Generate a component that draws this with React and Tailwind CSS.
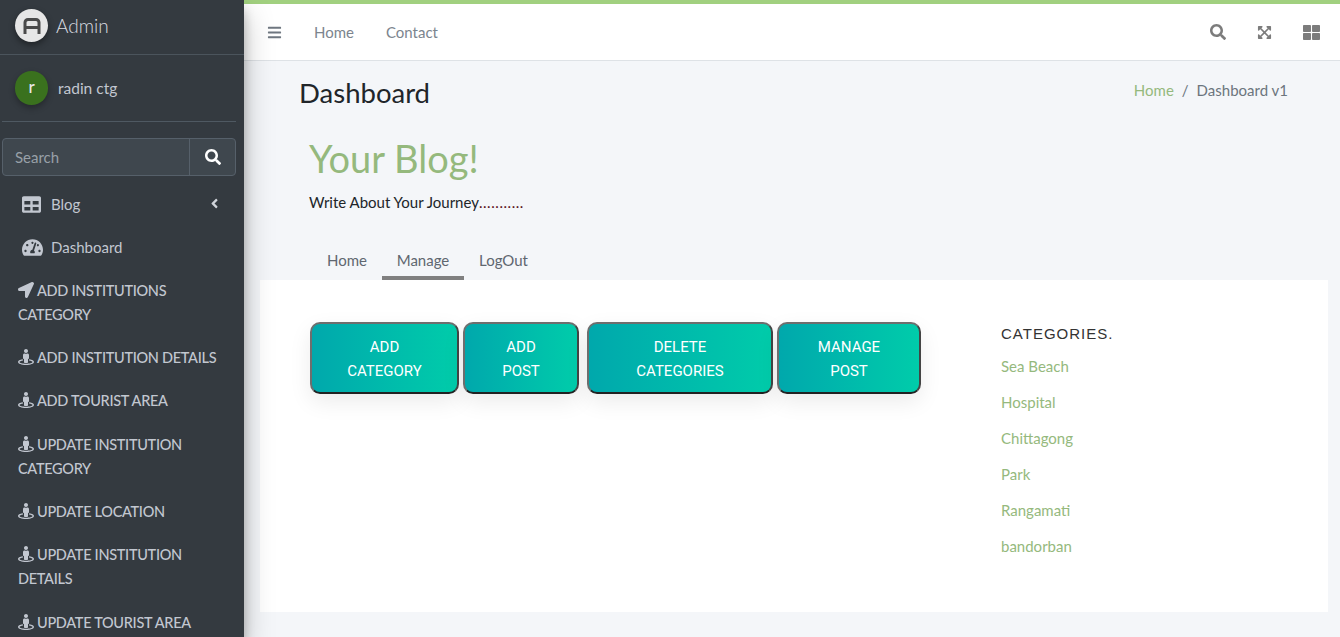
import React from "react";
import { FaBars, FaSearch, FaExpandArrowsAlt, FaThLarge, FaTable, FaTachometerAlt, FaAngleLeft, FaLocationArrow, FaStreetView } from "react-icons/fa";

const items = [
  [FaLocationArrow, "ADD INSTITUTIONS CATEGORY"],
  [FaStreetView, "ADD INSTITUTION DETAILS"],
  [FaStreetView, "ADD TOURIST AREA"],
  [FaStreetView, "UPDATE INSTITUTION CATEGORY"],
  [FaStreetView, "UPDATE LOCATION"],
  [FaStreetView, "UPDATE INSTITUTION DETAILS"],
  [FaStreetView, "UPDATE TOURIST AREA"],
];
const cats = ["Sea Beach", "Hospital", "Chittagong", "Park", "Rangamati", "bandorban"];
const btns = [
  ["ADD", "CATEGORY", "w-[149px] mr-[4px]"],
  ["ADD", "POST", "w-[116px] mr-[8px]"],
  ["DELETE", "CATEGORIES", "w-[186px] mr-[4px]"],
  ["MANAGE", "POST", "w-[144px]"],
];

function Sidebar() {
  return (
    <aside className="w-[244px] shrink-0 h-full bg-[#343a40] shadow-[0_14px_28px_rgba(0,0,0,0.25),0_10px_10px_rgba(0,0,0,0.22)] overflow-hidden z-10 text-[#c2c7d0]">
      <div className="h-[55px] flex items-center gap-[8px] pl-[15px] pb-[3px] border-b border-[#4b545c]">
        <div className="w-[33px] h-[33px] rounded-full bg-[#e6e6e6] shadow-[0_3px_6px_rgba(0,0,0,0.4)] flex items-center justify-center">
          <svg width="20" height="20" viewBox="0 0 20 20" fill="none" stroke="#4a4a4a" strokeWidth="3"><path d="M3 18V6.5a3 3 0 0 1 3-3h8a3 3 0 0 1 3 3V18M3 11.5h14" /></svg>
        </div>
        <span className="text-[19px] leading-none font-light text-[#dadce0]">Admin</span>
      </div>
      <div className="ml-[2px] mr-[8px] h-[67px] flex items-center gap-[10px] pl-[13px] border-b border-[#4f5962]">
        <div className="w-[33px] h-[34px] rounded-full bg-[#3a711e] shadow-[0_3px_6px_rgba(0,0,0,0.3)] flex items-center justify-center text-[#e8e8e8] text-[17px] font-medium pb-[2px]">r</div>
        <span className="text-[15.5px] text-[#c2c7d0] mt-[1px]">radin ctg</span>
      </div>
      <div className="ml-[2px] mr-[8px] mt-[16px] h-[38px] flex rounded-[4px] border border-[#56606a] bg-[#3f474e]">
        <div className="flex-1 pl-[12px] flex items-center text-[15px] text-[#98a0a8] border-r border-[#56606a]">Search</div>
        <div className="w-[45px] flex items-center justify-center"><FaSearch className="text-white text-[16px]" /></div>
      </div>
      <nav className="mt-[7px] text-[15px]">
        <div className="h-[43px] flex items-center pl-[22px] pr-[22px]">
          <FaTable className="text-[19px] mr-[10px]" /><span className="flex-1">Blog</span><FaAngleLeft className="text-[15px] text-[#d0d4da] -mt-[2px]" />
        </div>
        <div className="h-[43px] flex items-center pl-[22px]">
          <FaTachometerAlt className="text-[21px] mr-[8px]" /><span>Dashboard</span>
        </div>
        <ul className="pl-[18px] pr-[10px]">
          {items.map(([Icon, t]) => (
            <li key={t} className="py-[9.67px] leading-[24px] text-[14.5px] tracking-[-0.3px] font-medium">
              <Icon className="inline-block text-[16px] mr-[3px] align-[-2px]" />{t}
            </li>
          ))}
        </ul>
      </nav>
    </aside>
  );
}

export default function App() {
  return (
    <div className="flex h-screen w-full overflow-hidden bg-[#f4f6f9] font-['Lato','Noto_Sans',sans-serif]">
      <Sidebar />
      <div className="flex-1 min-w-0 flex flex-col">
        <header className="h-[61px] shrink-0 bg-white border-t-4 border-t-[#a1d07f] border-b border-b-[#dee2e6] flex items-center pl-[24px] pr-[20px] text-[#7c858e]">
          <FaBars className="text-[15px] text-[#6f7780] mr-[32px] -ml-[1px]" />
          <span className="text-[15px] mr-[32px]">Home</span>
          <span className="text-[15px]">Contact</span>
          <div className="ml-auto flex items-center gap-[31px] text-[#7c7c7c]">
            <FaSearch className="text-[16px]" /><FaExpandArrowsAlt className="text-[15px]" /><FaThLarge className="text-[17px]" />
          </div>
        </header>
        <main className="flex-1 min-h-0 flex flex-col">
          <div className="flex items-center justify-between pl-[55px] pr-[52px] h-[60px]">
            <h1 className="text-[27.5px] text-[#212529] leading-none mt-[4px]">Dashboard</h1>
            <div className="text-[15px] -mt-[2px]"><span className="text-[#95b97d]">Home</span><span className="text-[#6c757d] mx-[8px]">/</span><span className="text-[#6c757d]">Dashboard v1</span></div>
          </div>
          <div className="pl-[65px]">
            <h2 className="text-[38px] leading-[44px] text-[#95b97d] mt-[15px]">Your Blog!</h2>
            <p className="text-[15px] text-[#212529] mt-[10px] leading-[24px]">Write About Your Journey<span className="text-[#5a1018] tracking-[0.55px]">...........</span></p>
          </div>
          <div className="flex ml-[68px] mt-[33px] text-[15px] text-[#5f6770]">
            <div className="w-[70px] h-[33px] flex items-center justify-center pb-[6px]">Home</div>
            <div className="w-[82px] h-[33px] flex items-center justify-center border-b-[4px] border-[#808080] pb-[2px]">Manage</div>
            <div className="w-[79px] h-[33px] flex items-center justify-center pb-[6px]">LogOut</div>
          </div>
          <section className="ml-[16px] mr-[12px] h-[332px] bg-white flex">
            <div className="w-[741px] pl-[50px] pt-[42px] flex items-start">
              {btns.map(([a, b, w]) => (
                <div key={b + a} className={`${w} h-[72px] pt-[2px] rounded-[10px] border-2 border-[#6e6e6e] border-b-[#222] border-r-[#444] bg-linear-to-r from-[#00a8ac] to-[#00ccaa] shadow-[0_8px_22px_rgba(0,0,0,0.08)] flex flex-col items-center justify-center text-white text-[15px] leading-[24px] font-['Roboto','Noto_Sans',sans-serif]`}>
                  <span>{a}</span><span>{b}</span>
                </div>
              ))}
            </div>
            <div className="pt-[44px]">
              <h3 className="text-[15px] tracking-[1px] leading-[20px] text-[#333] font-['Liberation_Sans',sans-serif]">CATEGORIES.</h3>
              <ul className="mt-[10px] text-[15px] text-[#95b97d]">
                {cats.map((c) => <li key={c} className="h-[36px] leading-[24px]">{c}</li>)}
              </ul>
            </div>
          </section>
        </main>
      </div>
    </div>
  );
}
